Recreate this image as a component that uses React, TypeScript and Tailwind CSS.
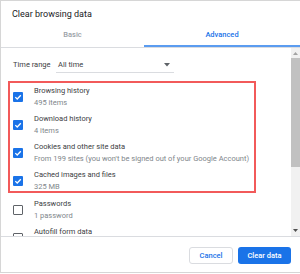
const items = [
  { label: "Browsing history", sub: "495 items", checked: true },
  { label: "Download history", sub: "4 items", checked: true },
  { label: "Cookies and other site data", sub: "From 199 sites (you won't be signed out of your Google Account)", checked: true },
  { label: "Cached images and files", sub: "325 MB", checked: true },
];

const rest = [
  { label: "Passwords", sub: "1 password", checked: false },
  { label: "Autofill form data", sub: "", checked: false },
];

function Checkbox({ checked }: { checked: boolean }) {
  if (!checked) {
    return <div className="w-[10px] h-[10px] shrink-0 rounded-[1px] border-[1.5px] border-[#5f6368] mt-[9px]" />;
  }
  return (
    <div className="w-[10px] h-[10px] shrink-0 rounded-[1px] bg-[#1a73e8] mt-[9px] flex items-center justify-center">
      <svg width="8" height="8" viewBox="0 0 8 8">
        <path d="M1.3 4.1 L3.2 6 L6.8 2.2" fill="none" stroke="white" strokeWidth="1.3" />
      </svg>
    </div>
  );
}

function Row({ label, sub, checked, h = "h-[28px]" }: { label: string; sub: string; checked: boolean; h?: string }) {
  return (
    <div className={`flex gap-[11px] ${h}`}>
      <Checkbox checked={checked} />
      <div className="pt-[3px] flex flex-col gap-[2px] whitespace-nowrap">
        <div className="h-[10px] leading-[10px] text-[7.5px] text-[#3c4043]">{label}</div>
        {sub && <div className="h-[10px] leading-[10px] text-[7.5px] text-[#80868b]">{sub}</div>}
      </div>
    </div>
  );
}

export default function App() {
  return (
    <div className="w-[300px] h-[273px] bg-white border-l border-t border-b border-[#d6d6d6] flex flex-col font-['Roboto',sans-serif] overflow-hidden">
      <div className="h-[22px] pl-[11px] pt-[7px] text-[9px] leading-[12px] text-[#202124]">Clear browsing data</div>

      <div className="h-[25px] grid grid-cols-[143px_1fr] border-b border-[#dadce0] text-[7.5px] font-medium">
        <div className="flex items-center justify-center text-[#9aa0a6] pb-[1px]">Basic</div>
        <div className="flex items-center justify-center text-[#1a73e8] border-b-2 border-[#5b9cf0] mt-[1px]">Advanced</div>
      </div>

      <div className="h-[188px] flex">
        <div className="flex-1 overflow-hidden">
          <div className="h-[33px] flex items-center pl-[12px] text-[7.5px] text-[#3c4043]">
            <span className="w-[45px]">Time range</span>
            <div className="w-[118px] h-[16px] flex items-center justify-between border-b border-[#dadce0] pl-[0px] pr-[4px] -ml-[2px] mt-[1px]">
              <span className="pl-[2px]">All time</span>
              <svg width="6" height="4" viewBox="0 0 6 4">
                <path d="M0 0 L6 0 L3 3.5 Z" fill="#5f6368" />
              </svg>
            </div>
          </div>

          <div className="ml-[7px] w-[248px] border-2 border-[#f25a5a] pl-[3px]">
            {items.map((it, i) => (
              <Row key={it.label} {...it} h={i === 3 ? "h-[24px]" : "h-[28px]"} />
            ))}
          </div>

          <div className="pl-[12px] pt-[3px]">
            {rest.map((it) => (
              <Row key={it.label} {...it} />
            ))}
          </div>
        </div>

        <div className="w-[9px] bg-[#f1f1f1] flex flex-col items-center">
          <div className="h-[10px] flex items-center justify-center">
            <svg width="5" height="3" viewBox="0 0 5 3">
              <path d="M0 3 L5 3 L2.5 0 Z" fill="#a3a3a3" />
            </svg>
          </div>
          <div className="w-full h-[109px] bg-[#c1c1c1]" />
          <div className="flex-1" />
          <div className="h-[12px] flex items-center justify-center">
            <svg width="5" height="3" viewBox="0 0 5 3">
              <path d="M0 0 L5 0 L2.5 3 Z" fill="#505050" />
            </svg>
          </div>
        </div>
      </div>

      <div className="flex-1 border-t border-[#dadce0] flex justify-end items-start pt-[10px] pr-[9px] gap-[5px]">
        <button className="w-[44px] h-[17px] rounded-[3px] border border-[#dadce0] bg-white text-[7.5px] font-medium text-[#1a73e8]">Cancel</button>
        <button className="w-[53px] h-[17px] rounded-[3px] bg-[#1a73e8] text-[7.5px] font-medium text-white">Clear data</button>
      </div>
    </div>
  );
}
